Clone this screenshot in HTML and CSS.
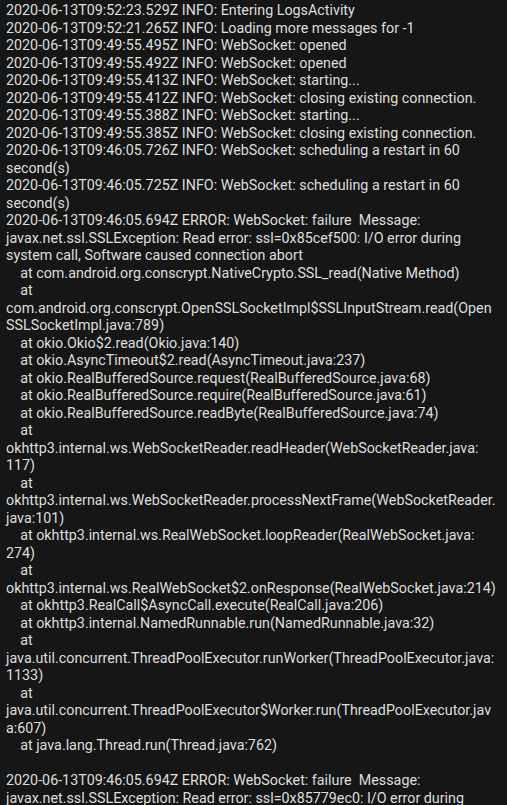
FILE: index.html
```html
<!DOCTYPE html>
<html lang="en">
  <head>
    <meta charset="UTF-8" />
    <meta name="viewport" content="width=device-width, initial-scale=1.0" />
    <title>Logs</title>
    <link rel="stylesheet" href="styles.css">
  </head>

  <body>
    <div class="log-container">
<pre class="log-text">2020-06-13T09:52:23.529Z INFO: Entering LogsActivity
2020-06-13T09:52:21.265Z INFO: Loading more messages for -1
2020-06-13T09:49:55.495Z INFO: WebSocket: opened
2020-06-13T09:49:55.492Z INFO: WebSocket: opened
2020-06-13T09:49:55.413Z INFO: WebSocket: starting...
2020-06-13T09:49:55.412Z INFO: WebSocket: closing existing connection.
2020-06-13T09:49:55.388Z INFO: WebSocket: starting...
2020-06-13T09:49:55.385Z INFO: WebSocket: closing existing connection.
2020-06-13T09:46:05.726Z INFO: WebSocket: scheduling a restart in 60
second(s)
2020-06-13T09:46:05.725Z INFO: WebSocket: scheduling a restart in 60
second(s)
2020-06-13T09:46:05.694Z ERROR: WebSocket: failure  Message:
javax.net.ssl.SSLException: Read error: ssl=0x85cef500: I/O error during
system call, Software caused connection abort
    at com.android.org.conscrypt.NativeCrypto.SSL_read(Native Method)
    at
com.android.org.conscrypt.OpenSSLSocketImpl$SSLInputStream.read(Open
SSLSocketImpl.java:789)
    at okio.Okio$2.read(Okio.java:140)
    at okio.AsyncTimeout$2.read(AsyncTimeout.java:237)
    at okio.RealBufferedSource.request(RealBufferedSource.java:68)
    at okio.RealBufferedSource.require(RealBufferedSource.java:61)
    at okio.RealBufferedSource.readByte(RealBufferedSource.java:74)
    at
okhttp3.internal.ws.WebSocketReader.readHeader(WebSocketReader.java:
117)
    at
okhttp3.internal.ws.WebSocketReader.processNextFrame(WebSocketReader.
java:101)
    at okhttp3.internal.ws.RealWebSocket.loopReader(RealWebSocket.java:
274)
    at
okhttp3.internal.ws.RealWebSocket$2.onResponse(RealWebSocket.java:214)
    at okhttp3.RealCall$AsyncCall.execute(RealCall.java:206)
    at okhttp3.internal.NamedRunnable.run(NamedRunnable.java:32)
    at
java.util.concurrent.ThreadPoolExecutor.runWorker(ThreadPoolExecutor.java:
1133)
    at
java.util.concurrent.ThreadPoolExecutor$Worker.run(ThreadPoolExecutor.jav
a:607)
    at java.lang.Thread.run(Thread.java:762)

2020-06-13T09:46:05.694Z ERROR: WebSocket: failure  Message:
javax.net.ssl.SSLException: Read error: ssl=0x85779ec0: I/O error during</pre>
    </div>
  </body>
</html>
```

FILE: styles.css
```css
* {
  margin: 0;
  padding: 0;
  box-sizing: border-box;
}

html,
body {
  height: 100%;
}

body {
  background-color: #161616;
  color: #dedede;
  overflow: hidden;
}

.log-container {
  padding: 2px 4px 0 6px;
}

.log-text {
  font-family: Roboto, "Noto Sans", sans-serif;
  font-size: 14.3px;
  line-height: 17.5px;
  white-space: pre;
}
```
